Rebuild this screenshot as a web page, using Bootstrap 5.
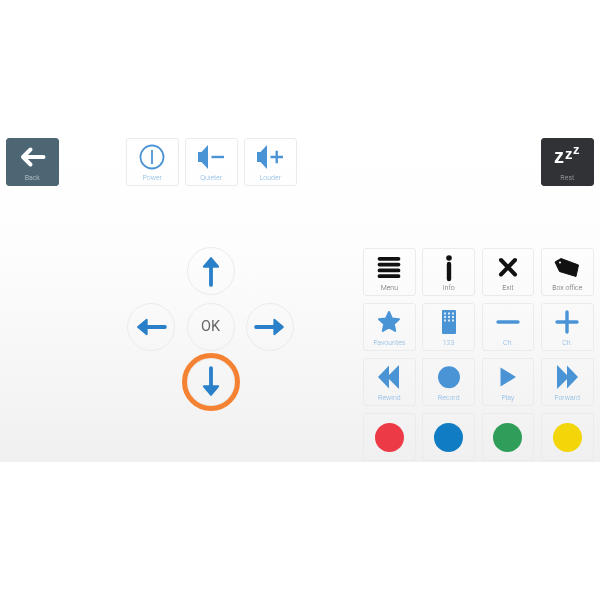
<!DOCTYPE html>
<html lang="en">
<head>
  <meta charset="UTF-8" />
  <meta name="viewport" content="width=device-width, initial-scale=1.0" />
  <title>Remote control</title>
  <link href="https://cdn.jsdelivr.net/npm/bootstrap@5.3.3/dist/css/bootstrap.min.css" rel="stylesheet" />
  <style>
    body {
      background-color: #fff;
      font-family: Roboto, "Liberation Sans", sans-serif;
    }
    .stage {
      height: 324px;
      margin-top: 138px;
      padding: 0 6.5px 0 6px;
      overflow: hidden;
      background: linear-gradient(to bottom, #fff 0%, #fdfdfd 35%, #f0f0f0 100%);
      filter: blur(0.6px);
    }
    .rkey {
      --bs-btn-border-color: #ebebeb;
      --bs-btn-border-radius: 3px;
      --bs-btn-padding-x: 0;
      --bs-btn-padding-y: 3px;
      --bs-btn-font-size: 7px;
      --bs-btn-font-weight: 300;
      --bs-btn-line-height: 9px;
      --bs-btn-color: #7fb5e4;
      --bs-btn-bg: transparent;
      width: 52.5px;
      height: 48px;
      flex: none;
    }
    .rkey svg { display: block; flex: none; margin-bottom: 2px; }
    .rkey-dark { --bs-btn-color: #666; }
    .rkey-back { --bs-btn-color: #c9d2d7; --bs-btn-bg: #4d6674; --bs-btn-border-color: #4d6674; }
    .rkey-rest { --bs-btn-color: #b0b0b0; --bs-btn-bg: #303236; --bs-btn-border-color: #303236; }
    .rkey-colour { --bs-btn-padding-y: 0; }
    .top-keys { margin-left: 67.500px; gap: 6.500px; }
    .lower-part { margin-top: 62px; }
    .dpad {
      display: grid;
      grid-template-columns: repeat(3, 48px);
      grid-auto-rows: 48px;
      column-gap: 11.500px;
      row-gap: 7.500px;
      margin-left: 121px;
      margin-top: -1px;
    }
    .pad-btn {
      --bs-btn-border-color: #ebebeb;
      --bs-btn-border-radius: 50%;
      --bs-btn-padding-x: 0;
      --bs-btn-padding-y: 0;
      --bs-btn-font-size: 14.500px;
      --bs-btn-color: #666;
      --bs-btn-bg: transparent;
      width: 48px;
      height: 48px;
    }
    .pad-btn.is-focus { outline: 5px solid #f58233; }
    .key-grid {
      display: grid;
      grid-template-columns: repeat(4, 52.500px);
      grid-auto-rows: 48px;
      column-gap: 6.800px;
      row-gap: 7px;
    }
    .dot-colour { width: 29px; height: 29px; }
    .dot-red { background-color: #ec3a46; }
    .dot-blue { background-color: #0f7cc4; }
    .dot-green { background-color: #2f9e5b; }
    .dot-yellow { background-color: #f2d60a; }
  </style>
</head>
<body>
  <div class="stage">
    <div class="d-flex">
      <button class="btn rkey rkey-back d-flex flex-column align-items-center">
        <svg width="30" height="30" viewBox="0 0 30 30"><path d="M26.500 15H6M13.500 7.500L6 15l7.500 7.500" fill="none" stroke="#fff" stroke-width="4" stroke-linecap="round" stroke-linejoin="round"/></svg>
        Back
      </button>
      <div class="d-flex top-keys">
        <button class="btn rkey d-flex flex-column align-items-center">
          <svg width="30" height="30" viewBox="0 0 30 30"><circle cx="15" cy="15" r="11.500" fill="none" stroke="#4a94d6" stroke-width="1.800"/><path d="M15 8v14" stroke="#4a94d6" stroke-width="1.800"/></svg>
          Power
        </button>
        <button class="btn rkey d-flex flex-column align-items-center">
          <svg width="30" height="30" viewBox="0 0 30 30"><path d="M2 10h3.500L12 3v24l-6.500-7H2z" fill="#4a94d6"/><path d="M15.500 15H28" stroke="#4a94d6" stroke-width="2.400"/></svg>
          Quieter
        </button>
        <button class="btn rkey d-flex flex-column align-items-center">
          <svg width="30" height="30" viewBox="0 0 30 30"><path d="M2 10h3.500L12 3v24l-6.500-7H2z" fill="#4a94d6"/><path d="M15.500 15H28M21.700 8.700v12.600" stroke="#4a94d6" stroke-width="2.400"/></svg>
          Louder
        </button>
      </div>
      <button class="btn rkey rkey-rest d-flex flex-column align-items-center ms-auto">
        <svg width="30" height="30" viewBox="0 0 30 30" font-family="Liberation Sans" font-weight="700" fill="#fff"><text x="2" y="21" font-size="20">z</text><text x="13" y="16.500" font-size="15">z</text><text x="21" y="12" font-size="13">z</text></svg>
        Rest
      </button>
    </div>

    <div class="d-flex justify-content-between lower-part">
      <div class="dpad">
        <div></div>
        <button class="btn pad-btn d-flex align-items-center justify-content-center">
          <svg width="48" height="48" viewBox="0 0 48 48"><path d="M24 10.500l7.500 9h-15z" fill="#2a80c8" stroke="#2a80c8" stroke-width="2" stroke-linejoin="round"/><path d="M24 18v20.500" stroke="#2a80c8" stroke-width="4" stroke-linecap="round"/></svg>
        </button>
        <div></div>
        <button class="btn pad-btn d-flex align-items-center justify-content-center">
          <svg width="48" height="48" viewBox="0 0 48 48"><g transform="rotate(-90 24 24)"><path d="M24 10.500l7.500 9h-15z" fill="#2a80c8" stroke="#2a80c8" stroke-width="2" stroke-linejoin="round"/><path d="M24 18v20.500" stroke="#2a80c8" stroke-width="4" stroke-linecap="round"/></g></svg>
        </button>
        <button class="btn pad-btn d-flex align-items-center justify-content-center">OK</button>
        <button class="btn pad-btn d-flex align-items-center justify-content-center">
          <svg width="48" height="48" viewBox="0 0 48 48"><g transform="rotate(90 24 24)"><path d="M24 10.500l7.500 9h-15z" fill="#2a80c8" stroke="#2a80c8" stroke-width="2" stroke-linejoin="round"/><path d="M24 18v20.500" stroke="#2a80c8" stroke-width="4" stroke-linecap="round"/></g></svg>
        </button>
        <div></div>
        <button class="btn pad-btn is-focus d-flex align-items-center justify-content-center">
          <svg width="48" height="48" viewBox="0 0 48 48"><g transform="rotate(180 24 24)"><path d="M24 10.500l7.500 9h-15z" fill="#2a80c8" stroke="#2a80c8" stroke-width="2" stroke-linejoin="round"/><path d="M24 18v20.500" stroke="#2a80c8" stroke-width="4" stroke-linecap="round"/></g></svg>
        </button>
        <div></div>
      </div>

      <div class="key-grid">
        <button class="btn rkey rkey-dark d-flex flex-column align-items-center">
          <svg width="30" height="30" viewBox="0 0 30 30"><path d="M5.500 6.800h19M5.500 12.600h19M5.500 18.400h19M5.500 24.200h19" stroke="#111" stroke-width="3.800" stroke-linecap="round"/></svg>
          Menu
        </button>
        <button class="btn rkey rkey-dark d-flex flex-column align-items-center">
          <svg width="30" height="30" viewBox="0 0 30 30"><circle cx="15" cy="6" r="2.800" fill="#111"/><path d="M15 12v15" stroke="#111" stroke-width="4.400" stroke-linecap="round"/></svg>
          Info
        </button>
        <button class="btn rkey rkey-dark d-flex flex-column align-items-center">
          <svg width="30" height="30" viewBox="0 0 30 30"><path d="M8 8l14 14.500M22 8L8 22.500" stroke="#111" stroke-width="4" stroke-linecap="round"/></svg>
          Exit
        </button>
        <button class="btn rkey rkey-dark d-flex flex-column align-items-center">
          <svg width="30" height="30" viewBox="0 0 30 30"><path d="M3 10l6-3.500 17.500 6.500-2.500 11.500-16.500-5z" fill="#111" stroke="#111" stroke-width="1" stroke-linejoin="round"/><circle cx="8" cy="10.500" r="1" fill="#fff"/></svg>
          Box office
        </button>

        <button class="btn rkey d-flex flex-column align-items-center">
          <svg width="30" height="30" viewBox="0 0 30 30"><path d="M15 5L17.940 11.450 24.990 12.260 19.760 17.050 21.170 23.990 15 20.500 8.830 23.990 10.240 17.050 5.010 12.260 12.060 11.450z" fill="#4a94d6" stroke="#4a94d6" stroke-width="2" stroke-linejoin="round"/></svg>
          Favourites
        </button>
        <button class="btn rkey d-flex flex-column align-items-center">
          <svg width="30" height="30" viewBox="0 0 30 30"><rect x="8" y="3" width="14" height="24" rx="1" fill="#4a94d6"/><g fill="#d7e8f6"><rect x="10" y="5.500" width="2" height="2"/><rect x="14" y="5.500" width="2" height="2"/><rect x="18" y="5.500" width="2" height="2"/><rect x="10" y="9" width="2" height="2"/><rect x="14" y="9" width="2" height="2"/><rect x="18" y="9" width="2" height="2"/><rect x="10" y="12.500" width="2" height="2"/><rect x="14" y="12.500" width="2" height="2"/><rect x="18" y="12.500" width="2" height="2"/></g></svg>
          123
        </button>
        <button class="btn rkey d-flex flex-column align-items-center">
          <svg width="30" height="30" viewBox="0 0 30 30"><path d="M5 15h20" stroke="#4a94d6" stroke-width="3.400" stroke-linecap="round"/></svg>
          Ch.
        </button>
        <button class="btn rkey d-flex flex-column align-items-center">
          <svg width="30" height="30" viewBox="0 0 30 30"><path d="M5 15h20M15 5v20" stroke="#4a94d6" stroke-width="3.400" stroke-linecap="round"/></svg>
          Ch.
        </button>

        <button class="btn rkey d-flex flex-column align-items-center">
          <svg width="30" height="30" viewBox="0 0 30 30"><path d="M4 15L15 3.500v23zM13 15L25 3v24z" fill="#4a94d6"/></svg>
          Rewind
        </button>
        <button class="btn rkey d-flex flex-column align-items-center">
          <svg width="30" height="30" viewBox="0 0 30 30"><circle cx="15" cy="15.300" r="11" fill="#4a94d6"/></svg>
          Record
        </button>
        <button class="btn rkey d-flex flex-column align-items-center">
          <svg width="30" height="30" viewBox="0 0 30 30"><path d="M7.500 5.500L23 15 7.500 24.500z" fill="#4a94d6"/></svg>
          Play
        </button>
        <button class="btn rkey d-flex flex-column align-items-center">
          <svg width="30" height="30" viewBox="0 0 30 30"><path d="M5 3l12 12L5 27zM15 3.500L26 15 15 26.500z" fill="#4a94d6"/></svg>
          Forward
        </button>

        <button class="btn rkey rkey-colour d-flex align-items-center justify-content-center"><span class="d-block rounded-circle dot-colour dot-red"></span></button>
        <button class="btn rkey rkey-colour d-flex align-items-center justify-content-center"><span class="d-block rounded-circle dot-colour dot-blue"></span></button>
        <button class="btn rkey rkey-colour d-flex align-items-center justify-content-center"><span class="d-block rounded-circle dot-colour dot-green"></span></button>
        <button class="btn rkey rkey-colour d-flex align-items-center justify-content-center"><span class="d-block rounded-circle dot-colour dot-yellow"></span></button>
      </div>
    </div>
  </div>
  <script src="https://cdn.jsdelivr.net/npm/bootstrap@5.3.3/dist/js/bootstrap.bundle.min.js"></script>
</body>
</html>
